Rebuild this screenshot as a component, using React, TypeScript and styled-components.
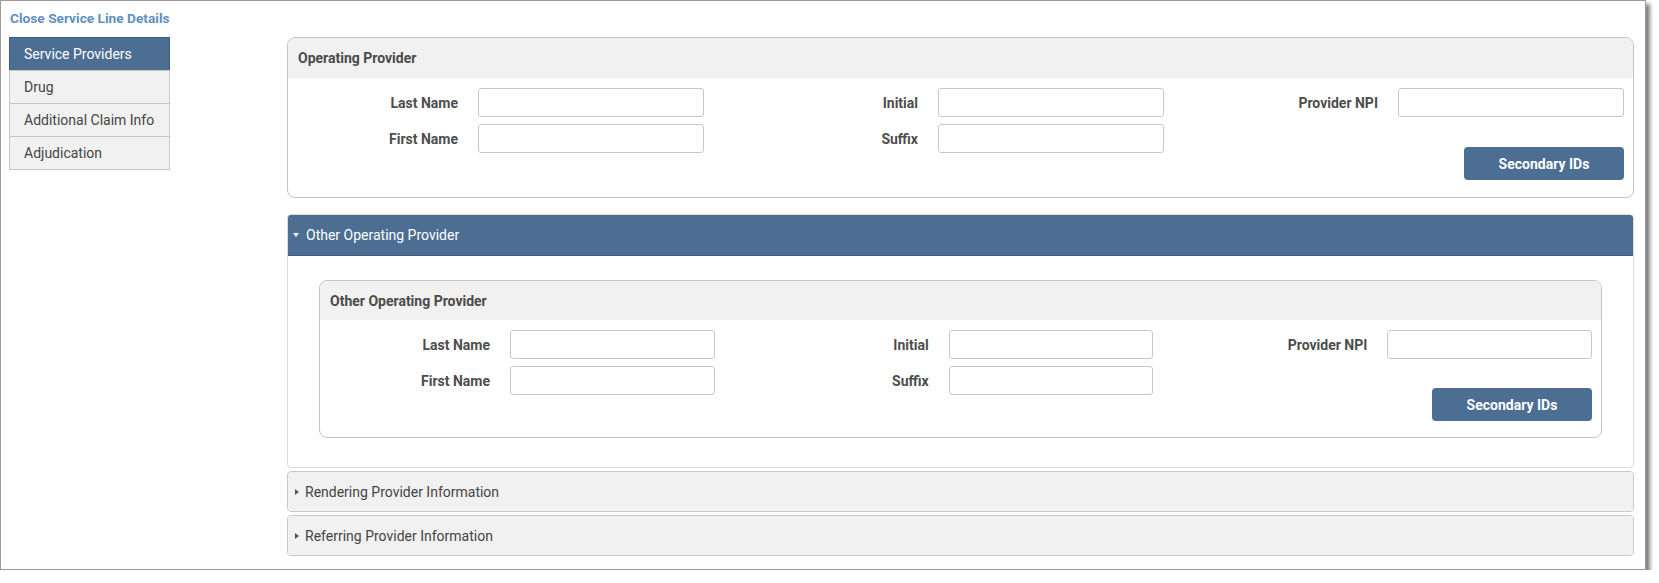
import React from "react";
import styled, { createGlobalStyle } from "styled-components";

const Global = createGlobalStyle`
  html, body { margin: 0; padding: 0; background: #ffffff; }
  body { font-family: Roboto, "Liberation Sans", Arial, sans-serif; color: #444; }
  * { box-sizing: border-box; }
`;

const Frame = styled.div`
  width: 1646px;
  height: 570px;
  border: 1px solid #9a9a9a;
  background: #fff;
  box-shadow: 4px 4px 4px rgba(0, 0, 0, 0.5);
  display: flex;
  flex-direction: column;
`;

const CloseLink = styled.a`
  display: block;
  margin: 9px 0 0 9px;
  font-size: 13.7px;
  line-height: 16px;
  font-weight: 700;
  color: #5f8fc2;
  text-decoration: none;
  cursor: pointer;
`;

const Layout = styled.div`
  display: flex;
  align-items: flex-start;
  margin-top: 11px;
  padding-left: 8px;
`;

const Sidebar = styled.nav`
  width: 161px;
  display: flex;
  flex-direction: column;
`;

const NavItem = styled.div<{ $active?: boolean }>`
  height: 34px;
  display: flex;
  align-items: center;
  padding-left: 14px;
  font-size: 14px;
  background: ${(p) => (p.$active ? "#4b6e92" : "#f1f1f1")};
  color: ${(p) => (p.$active ? "#ffffff" : "#444")};
  border: 1px solid ${(p) => (p.$active ? "#3d5d7e" : "#c6c6c6")};
  & + & { margin-top: -1px; }
`;

const Main = styled.main`
  margin-left: 117px;
  width: 1347px;
  display: flex;
  flex-direction: column;
`;

const Card = styled.section`
  border: 1px solid #c4c4c4;
  border-radius: 8px;
  overflow: hidden;
  background: #fff;
`;

const CardHeader = styled.div<{ $compact?: boolean }>`
  height: ${(p) => (p.$compact ? "39px" : "40px")};
  background: #f1f1f1;
  display: flex;
  align-items: center;
  padding-left: 10px;
  font-size: 14px;
  font-weight: 700;
  color: #4a4a4a;
`;

const CardBody = styled.div<{ $compact?: boolean }>`
  padding: 10px 9px ${(p) => (p.$compact ? "16px" : "17px")} 0;
  display: grid;
  grid-template-columns: repeat(3, 1fr);
  column-gap: 44px;
`;

const Column = styled.div`
  display: flex;
  flex-direction: column;
  gap: 7px;
`;

const Field = styled.label`
  display: grid;
  grid-template-columns: 170px 1fr;
  column-gap: 20px;
  align-items: center;
`;

const FieldLabel = styled.span`
  text-align: right;
  font-size: 14px;
  font-weight: 700;
  color: #4d4d4d;
`;

const Input = styled.input`
  height: 29px;
  width: 100%;
  border: 1px solid #c8c8c8;
  border-radius: 3px;
  background: #fff;
  font-family: inherit;
  font-size: 13px;
  padding: 0 8px;
`;

const ButtonRow = styled.div<{ $compact?: boolean }>`
  display: flex;
  justify-content: flex-end;
  margin-top: ${(p) => (p.$compact ? "22px" : "23px")};
`;

const PrimaryButton = styled.button`
  width: 160px;
  height: 33px;
  border: none;
  border-radius: 4px;
  background: #4b6e92;
  color: #fff;
  font-family: inherit;
  font-size: 14px;
  font-weight: 700;
  cursor: pointer;
`;

const Panel = styled.section<{ $open?: boolean }>`
  margin-top: ${(p) => (p.$open ? "16px" : "3px")};
  border: 1px solid ${(p) => (p.$open ? "#dcdcdc" : "#c9c9c9")};
  border-radius: 4px;
  overflow: hidden;
  background: #fff;
`;

const PanelHeader = styled.div<{ $open?: boolean }>`
  height: ${(p) => (p.$open ? "42px" : "39px")};
  display: flex;
  align-items: center;
  padding-left: 6px;
  font-size: 14px;
  background: ${(p) => (p.$open ? "#4b6e92" : "#f1f1f1")};
  color: ${(p) => (p.$open ? "#ffffff" : "#444")};
  margin: ${(p) => (p.$open ? "-1px -1px 0 -1px" : "0")};
  border-bottom: ${(p) => (p.$open ? "1px solid #3d5d7e" : "none")};
`;

const Caret = styled.span<{ $open?: boolean }>`
  display: inline-block;
  width: 0;
  height: 0;
  margin-right: 7px;
  ${(p) =>
    p.$open
      ? `border-left: 3.5px solid transparent; border-right: 3.5px solid transparent; border-top: 4px solid #fff;`
      : `border-top: 3.5px solid transparent; border-bottom: 3.5px solid transparent; border-left: 4px solid #555; margin-left: 1px; margin-right: 6px;`}
`;

const PanelBody = styled.div`
  padding: 24px 31px 29px 31px;
`;

type ProviderProps = { title: string; compact?: boolean };

const ProviderCard: React.FC<ProviderProps> = ({ title, compact }) => (
  <Card>
    <CardHeader $compact={compact}>{title}</CardHeader>
    <CardBody $compact={compact}>
      <Column>
        <Field>
          <FieldLabel>Last Name</FieldLabel>
          <Input />
        </Field>
        <Field>
          <FieldLabel>First Name</FieldLabel>
          <Input />
        </Field>
      </Column>
      <Column>
        <Field>
          <FieldLabel>Initial</FieldLabel>
          <Input />
        </Field>
        <Field>
          <FieldLabel>Suffix</FieldLabel>
          <Input />
        </Field>
      </Column>
      <Column>
        <Field>
          <FieldLabel>Provider NPI</FieldLabel>
          <Input />
        </Field>
        <ButtonRow $compact={compact}>
          <PrimaryButton>Secondary IDs</PrimaryButton>
        </ButtonRow>
      </Column>
    </CardBody>
  </Card>
);

export default function App() {
  const nav = ["Service Providers", "Drug", "Additional Claim Info", "Adjudication"];
  return (
    <>
      <Global />
      <Frame>
        <CloseLink>Close Service Line Details</CloseLink>
        <Layout>
          <Sidebar>
            {nav.map((n, i) => (
              <NavItem key={n} $active={i === 0}>
                {n}
              </NavItem>
            ))}
          </Sidebar>
          <Main>
            <ProviderCard title="Operating Provider" />
            <Panel $open>
              <PanelHeader $open>
                <Caret $open />
                Other Operating Provider
              </PanelHeader>
              <PanelBody>
                <ProviderCard title="Other Operating Provider" compact />
              </PanelBody>
            </Panel>
            <Panel>
              <PanelHeader>
                <Caret />
                Rendering Provider Information
              </PanelHeader>
            </Panel>
            <Panel>
              <PanelHeader>
                <Caret />
                Referring Provider Information
              </PanelHeader>
            </Panel>
          </Main>
        </Layout>
      </Frame>
    </>
  );
}
